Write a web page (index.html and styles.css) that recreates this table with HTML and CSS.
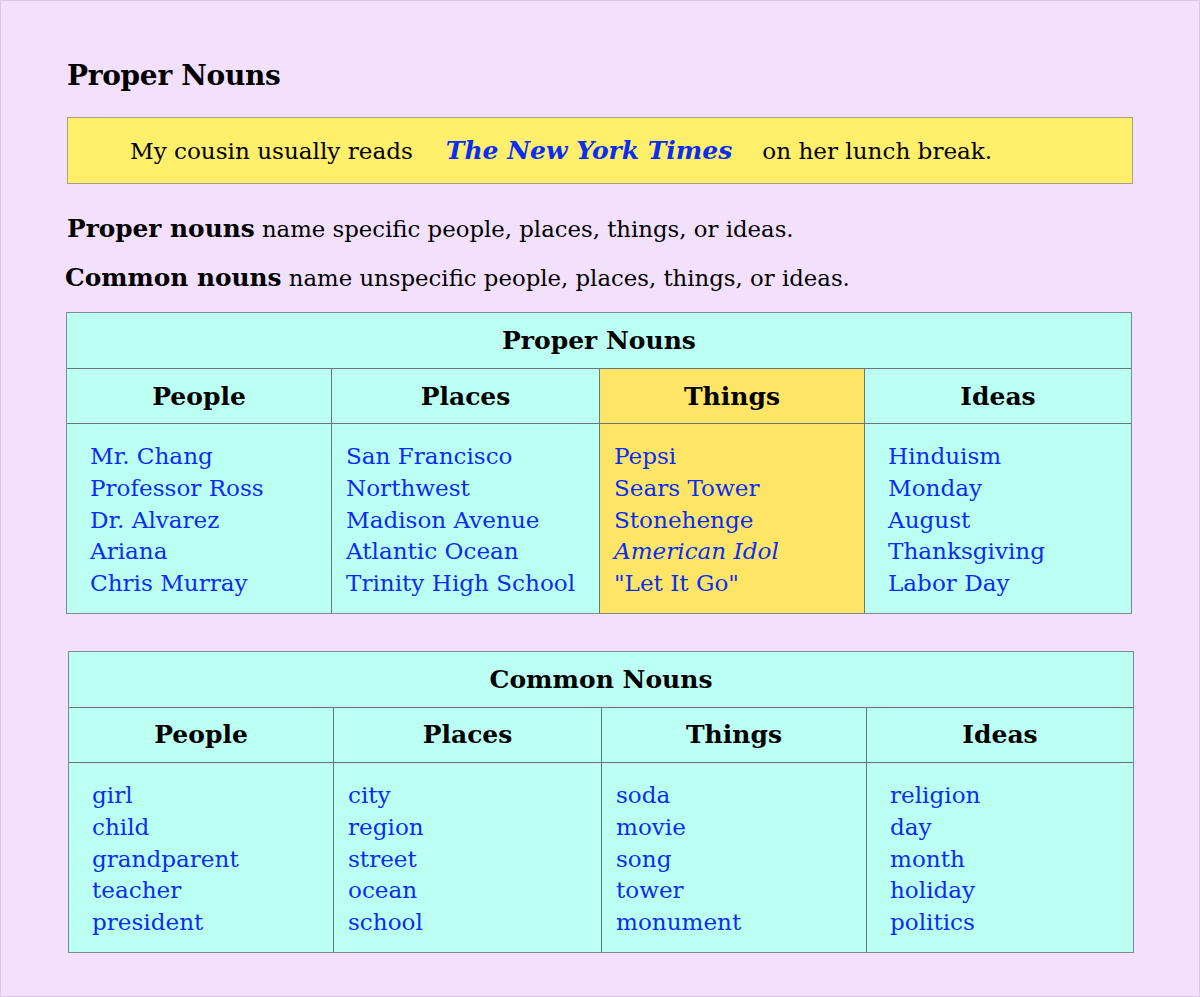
FILE: index.html
```html
<!DOCTYPE html>
<html>
<head>
<meta charset="utf-8">
<link rel="stylesheet" href="styles.css">
</head>
<body>
<div class="page">
  <h1 class="title">Proper Nouns</h1>
  <div class="example">
    <span>My cousin usually reads</span>
    <span class="paper">The New York Times</span>
    <span>on her lunch break.</span>
  </div>
  <p class="def def-proper"><b>Proper nouns</b> name specific people, places, things, or ideas.</p>
  <p class="def def-common"><b>Common nouns</b> name unspecific people, places, things, or ideas.</p>

  <div class="nouns nouns-proper">
    <div class="nouns-title">Proper Nouns</div>
    <div class="nouns-grid">
      <div class="col col-outer">
        <div class="col-head">People</div>
        <ul class="col-list">
          <li>Mr. Chang</li><li>Professor Ross</li><li>Dr. Alvarez</li><li>Ariana</li><li>Chris Murray</li>
        </ul>
      </div>
      <div class="col">
        <div class="col-head">Places</div>
        <ul class="col-list">
          <li>San Francisco</li><li>Northwest</li><li>Madison Avenue</li><li>Atlantic Ocean</li><li>Trinity High School</li>
        </ul>
      </div>
      <div class="col col-hl">
        <div class="col-head">Things</div>
        <ul class="col-list">
          <li>Pepsi</li><li>Sears Tower</li><li>Stonehenge</li><li><i>American Idol</i></li><li>"Let It Go"</li>
        </ul>
      </div>
      <div class="col col-outer">
        <div class="col-head">Ideas</div>
        <ul class="col-list">
          <li>Hinduism</li><li>Monday</li><li>August</li><li>Thanksgiving</li><li>Labor Day</li>
        </ul>
      </div>
    </div>
  </div>

  <div class="nouns nouns-common">
    <div class="nouns-title">Common Nouns</div>
    <div class="nouns-grid">
      <div class="col col-outer">
        <div class="col-head">People</div>
        <ul class="col-list">
          <li>girl</li><li>child</li><li>grandparent</li><li>teacher</li><li>president</li>
        </ul>
      </div>
      <div class="col">
        <div class="col-head">Places</div>
        <ul class="col-list">
          <li>city</li><li>region</li><li>street</li><li>ocean</li><li>school</li>
        </ul>
      </div>
      <div class="col">
        <div class="col-head">Things</div>
        <ul class="col-list">
          <li>soda</li><li>movie</li><li>song</li><li>tower</li><li>monument</li>
        </ul>
      </div>
      <div class="col col-outer">
        <div class="col-head">Ideas</div>
        <ul class="col-list">
          <li>religion</li><li>day</li><li>month</li><li>holiday</li><li>politics</li>
        </ul>
      </div>
    </div>
  </div>
</div>
</body>
</html>
```

FILE: styles.css
```css
html, body {
  margin: 0;
  padding: 0;
}
body {
  background: #f2e0fd;
  font-family: "DejaVu Serif", Georgia, serif;
  color: #000;
}
.page {
  box-sizing: border-box;
  width: 1200px;
  height: 997px;
  border: 1px solid #d9c8e4;
  padding: 57px 0 0 66px;
}
.title {
  margin: 0;
  font-size: 28px;
  font-weight: bold;
  line-height: 35px;
  letter-spacing: -0.3px;
}
.example {
  box-sizing: border-box;
  margin-top: 24px;
  width: 1066px;
  height: 67px;
  background: #ffef6b;
  border: 1px solid #a8a08a;
  display: flex;
  align-items: center;
  padding-left: 62px;
  font-size: 23.1px;
}
.paper {
  color: #0a2df2;
  font-weight: bold;
  font-style: italic;
  font-size: 25px;
  margin: 0 30px 0 33px;
}
.def {
  margin: 0;
  font-size: 22.8px;
  line-height: 30px;
}
.def b {
  font-size: 24.8px;
}
.def-proper {
  margin-top: 30px;
}
.def-common {
  margin-top: 19px;
  margin-left: -2px;
}
.nouns {
  box-sizing: border-box;
  width: 1066px;
  background: #bcfff3;
  border: 1px solid #808a8a;
}
.nouns-proper {
  margin-top: 19px;
  margin-left: -1px;
}
.nouns-common {
  margin-top: 37px;
  margin-left: 1px;
}
.nouns-title {
  height: 55px;
  display: flex;
  align-items: center;
  justify-content: center;
  font-weight: bold;
  font-size: 25px;
  border-bottom: 1px solid #6a7676;
}
.nouns-grid {
  display: grid;
  grid-template-columns: 264px 268px 265px 1fr;
}
.col {
  border-left: 1px solid #6a7676;
}
.col:first-child {
  border-left: none;
}
.col-hl {
  background: #ffe566;
}
.col-head {
  height: 54px;
  display: flex;
  align-items: center;
  justify-content: center;
  font-weight: bold;
  font-size: 25px;
  border-bottom: 1px solid #6a7676;
}
.col-list {
  list-style: none;
  margin: 0;
  padding: 17px 0 13px 14px;
  color: #0a2df2;
  font-size: 23.1px;
  line-height: 31.8px;
}
.col-outer .col-list {
  padding-left: 23px;
}
.col-list li {
  white-space: nowrap;
}
```
